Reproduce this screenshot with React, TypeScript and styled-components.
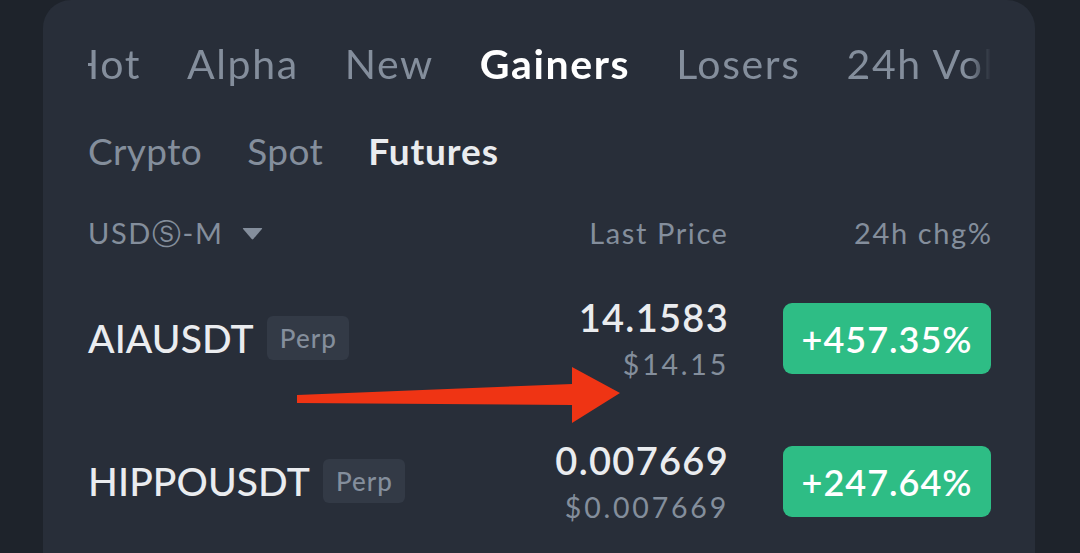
import React from 'react'
import styled, { createGlobalStyle } from 'styled-components'

const GlobalStyle = createGlobalStyle`
    html, body {
        margin: 0;
        padding: 0;
        background: #1e232b;
        overflow: hidden;
    }
    body {
        font-family: Lato, "Open Sans", "DejaVu Sans", sans-serif;
        -webkit-font-smoothing: antialiased;
    }
`

const Page = styled.div`
    position: relative;
    width: 1080px;
    height: 553px;
    overflow: hidden;
`

const Card = styled.div`
    margin: 0 45px 0 43px;
    min-height: 600px;
    background: #282e39;
    border-radius: 28px 28px 0 0;
    padding: 0 44px 0 45px;
    box-sizing: border-box;
`

const TabBar = styled.div`
    height: 128px;
    display: flex;
    align-items: center;
    overflow: hidden;
    -webkit-mask-image: linear-gradient(to right, #000 0, #000 calc(100% - 22px), transparent 100%);
    mask-image: linear-gradient(to right, #000 0, #000 calc(100% - 22px), transparent 100%);
`

const TabStrip = styled.div`
    display: flex;
    gap: 46px;
    margin-left: -20px;
    white-space: nowrap;
`

const Tab = styled.span<{ $active?: boolean }>`
    font-size: 41px;
    line-height: 1.2;
    letter-spacing: 1.6px;
    font-weight: ${p => (p.$active ? 700 : 400)};
    color: ${p => (p.$active ? '#ffffff' : '#848e9c')};
`

const SubTabs = styled.div`
    height: 46px;
    display: flex;
    align-items: center;
    gap: 45px;
`

const SubTab = styled.span<{ $active?: boolean }>`
    font-size: 37px;
    line-height: 1.2;
    letter-spacing: ${p => (p.$active ? '0.9px' : '0.4px')};
    font-weight: ${p => (p.$active ? 700 : 400)};
    color: ${p => (p.$active ? '#eaecef' : '#848e9c')};
`

const Grid = styled.div`
    display: grid;
    grid-template-columns: 1fr auto 208px;
    column-gap: 56px;
    align-items: center;
`

const Header = styled(Grid)`
    height: 93px;
    padding-top: 26px;
    box-sizing: border-box;
    color: #848e9c;
    font-size: 29px;
    line-height: 1.2;
    letter-spacing: 1.6px;
`

const MarketSelect = styled.div`
    display: flex;
    align-items: center;
    gap: 19px;
`

const HeadRight = styled.div`
    text-align: right;
    margin-right: -1.5px;
`

const Row = styled(Grid)`
    height: 143px;
`

const Name = styled.div`
    display: flex;
    align-items: center;
    gap: 13px;
`

const Symbol = styled.span`
    font-size: 39px;
    line-height: 1.2;
    letter-spacing: 0.1px;
    color: #eaecef;
    font-weight: 500;
`

const Perp = styled.span`
    display: inline-flex;
    align-items: center;
    height: 44px;
    padding: 0 12px 0 13px;
    border-radius: 6px;
    background: #333a46;
    color: #848e9c;
    font-size: 26px;
    letter-spacing: 1px;
    font-weight: 500;
`

const PriceCol = styled.div`
    display: flex;
    flex-direction: column;
    align-items: flex-end;
    margin-right: -2px;
`

const Price = styled.span`
    font-size: 38px;
    line-height: 44px;
    letter-spacing: 1.3px;
    font-weight: 600;
    color: #eaecef;
`

const Fiat = styled.span`
    margin-top: 7px;
    font-size: 28.5px;
    line-height: 36px;
    letter-spacing: 2.8px;
    color: #848e9c;
`

const Change = styled.div`
    height: 71px;
    border-radius: 9px;
    background: #2ebd85;
    color: #ffffff;
    font-size: 36px;
    letter-spacing: 1px;
    font-weight: 600;
    display: flex;
    align-items: center;
    justify-content: center;
`

const Arrow = styled.svg`
    position: absolute;
    left: 290px;
    top: 360px;
    pointer-events: none;
`

interface Ticker {
    symbol: string,
    price: string,
    fiat: string,
    change: string
}

const tickers: Ticker[] = [
    { symbol: 'AIAUSDT', price: '14.1583', fiat: '$14.15', change: '+457.35%' },
    { symbol: 'HIPPOUSDT', price: '0.007669', fiat: '$0.007669', change: '+247.64%' }
]

const tabs = ['Hot', 'Alpha', 'New', 'Gainers', 'Losers', '24h Vol']
const subTabs = ['Crypto', 'Spot', 'Futures']

function TickerRow({ ticker }: { ticker: Ticker }) {
    return (
        <Row>
            <Name>
                <Symbol>{ticker.symbol}</Symbol>
                <Perp>Perp</Perp>
            </Name>
            <PriceCol>
                <Price>{ticker.price}</Price>
                <Fiat>{ticker.fiat}</Fiat>
            </PriceCol>
            <Change>{ticker.change}</Change>
        </Row>
    )
}

const App = () => {
    return (
        <Page>
            <GlobalStyle />
            <Card>
                <TabBar>
                    <TabStrip>
                        {tabs.map(t => <Tab key={t} $active={t === 'Gainers'}>{t}</Tab>)}
                    </TabStrip>
                </TabBar>
                <SubTabs>
                    {subTabs.map(t => <SubTab key={t} $active={t === 'Futures'}>{t}</SubTab>)}
                </SubTabs>
                <Header>
                    <MarketSelect>
                        <span>USDⓈ-M</span>
                        <svg width="21" height="13" viewBox="0 0 21 13">
                            <path d="M1.5 1 H19.5 Q20.6 1 19.9 2 L11.3 12 Q10.5 12.8 9.7 12 L1.1 2 Q0.4 1 1.5 1 Z" fill="#848e9c" />
                        </svg>
                    </MarketSelect>
                    <HeadRight>Last Price</HeadRight>
                    <HeadRight>24h chg%</HeadRight>
                </Header>
                {tickers.map(t => <TickerRow key={t.symbol} ticker={t} />)}
            </Card>
            <Arrow width="340" height="70" viewBox="0 0 340 70">
                <polygon points="7,35 282,24 282,7 330,33 282,63 282,45 7,43" fill="#ef3414" />
            </Arrow>
        </Page>
    )
}

export default App
